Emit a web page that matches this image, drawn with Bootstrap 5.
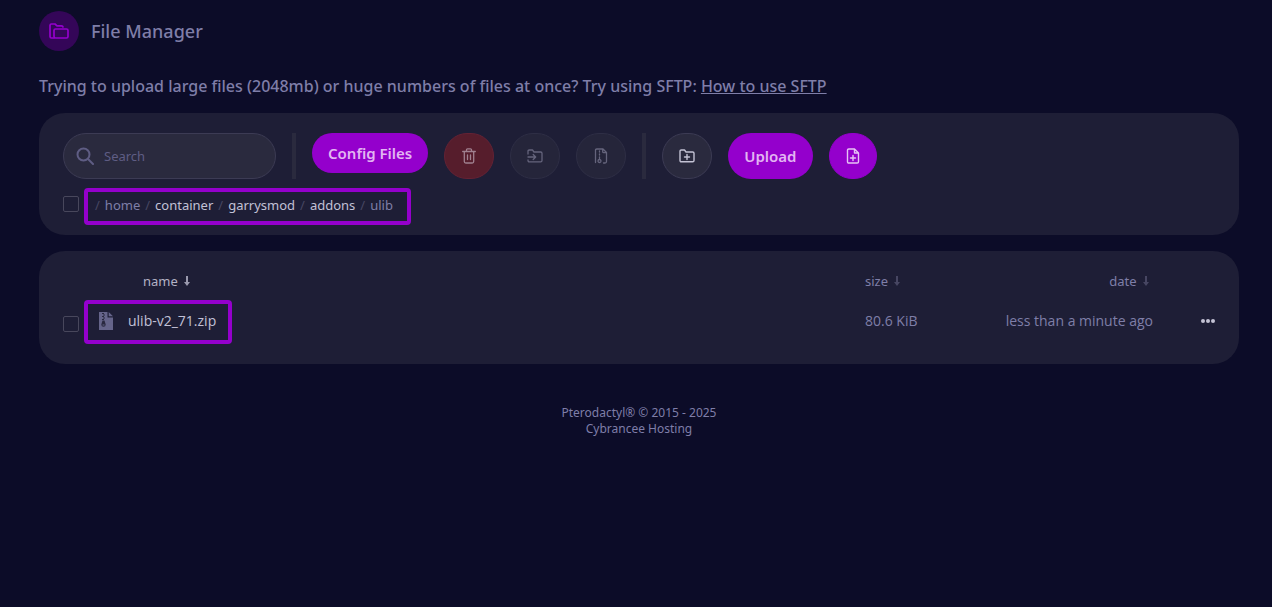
<!DOCTYPE html>
<html lang="en">
<head>
<meta charset="utf-8">
<meta name="viewport" content="width=device-width, initial-scale=1">
<title>File Manager</title>
<link href="https://cdn.jsdelivr.net/npm/bootstrap@5.3.0/dist/css/bootstrap.min.css" rel="stylesheet">
<style>
:root { --page: #0c0c28; --panel: #1e1e36; --field: #2a2a3e; --line: #3c3b54; --accent: #9400cc; --muted: #7f7ea8; --bright: #c2c1d6; --faint: #474662; }
body { background: var(--page); color: var(--muted); font: 13px/20px "Noto Sans", sans-serif; }
main { padding: 11px 33px 0 39px; }
a { color: inherit; }
svg { display: block; fill: none; stroke: currentColor; stroke-linecap: round; stroke-linejoin: round; }
.logo-dot { width: 40px; height: 40px; background: #340658; color: var(--accent); }
.page-title { font-size: 18px; line-height: 28px; font-weight: 500; }
.notice { font-size: 16px; line-height: 24px; font-weight: 500; margin: 23px 0 15px; }
.panel { background: var(--panel); border-radius: 26px; padding: 20px 24px; }
.tools-panel { padding-bottom: 10px; margin-bottom: 16px; }
.search-box { width: 213px; height: 46px; background: var(--field); border: 1px solid var(--line); color: #5f5d84; padding: 0 12px; gap: 10px; }
.search-box input { width: 100%; background: none; border: 0; outline: 0; color: var(--bright); padding: 0; }
.search-box input::placeholder { color: #5f5d84; opacity: 1; }
.divider { width: 4px; height: 46px; background: var(--field); }
.tool { width: 50px; height: 46px; padding: 0; display: flex; align-items: center; justify-content: center; border-radius: 25px; background: var(--field); border: 1px solid var(--line); color: #c3c2d4; }
.tool:disabled { background: #25253a; border-color: #2e2e45; color: #65647c; opacity: 1; }
.tool.trash:disabled { background: #561d2c; border-color: #642234; color: #a0808f; }
.tool.add { width: 48px; background: var(--accent); border-color: var(--accent); color: #e6c3f4; }
.action { height: 46px; padding: 0 16px; border: 0; border-radius: 23px; background: var(--accent); color: #e2b5f2; font-size: 15px; font-weight: 600; }
.action.short { height: 40px; border-radius: 20px; }
.tick { appearance: none; width: 16px; height: 16px; margin: 0; border: 1px solid #48475c; border-radius: 2px; background: transparent; display: block; }
.tick:checked { background: var(--accent); }
.path-row { margin-top: 9px; gap: 5px; }
.framed { border: 4px solid var(--accent); border-radius: 4px; }
.path { height: 37px; padding: 2px 14px 0 7px; gap: 5px; line-height: 22px; }
.path .sep { color: var(--faint); }
.path a { color: var(--bright); text-decoration: none; }
.files { table-layout: fixed; width: 100%; }
.files th { height: 20px; font-weight: 400; padding: 0; }
.files td { height: 73px; padding: 9px 0 0; vertical-align: top; font: 14px/20px "Open Sans", sans-serif; }
.files .arrow { display: inline-block; margin-left: 3px; color: var(--faint); }
.files .sorted { color: #b3b2c4; }
.files .sorted .arrow { color: #9a99ad; }
.files .name-head { padding-left: 59px; }
.files .val { padding-top: 20px; }
.c-tick { width: 21px; } .c-size { width: 100px; } .c-date { width: 188px; } .c-more { width: 62px; }
.file { height: 44px; padding: 0 12px 2px 11px; gap: 15px; color: var(--bright); text-decoration: none; }
.more { display: flex; align-items: center; height: 20px; margin-left: auto; border: 0; background: none; padding: 0; color: #c3c2d4; }
.foot { font-size: 12px; line-height: 16px; margin-top: 41px; }
</style>
</head>
<body>
<main>
  <header class="d-flex align-items-center gap-2">
    <span class="logo-dot rounded-circle d-flex align-items-center justify-content-center me-1">
      <svg width="20" height="16" viewBox="0 0 20 16" stroke-width="1.700"><path d="M5 15H2.500A1.500 1.500 0 0 1 1 13.500V2.200A1.300 1.300 0 0 1 2.300 1H6l2 1.800h4.500Q13.800 2.800 14 4"/><rect x="5" y="6" width="14" height="9" rx="1.500"/></svg>
    </span>
    <h1 class="page-title m-0">File Manager</h1>
  </header>
  <p class="notice">Trying to upload large files (2048mb) or huge numbers of files at once? Try using SFTP: <a href="#">How to use SFTP</a></p>

  <section class="panel tools-panel">
    <div class="d-flex flex-wrap gap-3">
      <label class="search-box rounded-pill d-flex align-items-center">
        <svg class="flex-shrink-0" width="18" height="18" viewBox="0 0 18 18" stroke-width="2"><circle cx="7.500" cy="7.500" r="6"/><path d="M12 12l5 5"/></svg>
        <input type="search" placeholder="Search" aria-label="Search">
      </label>
      <span class="divider"></span>
      <button class="action short" type="button">Config Files</button>
      <button class="tool trash" type="button" disabled aria-label="Delete">
        <svg width="14" height="16" viewBox="0 0 14 16" stroke-width="1.300"><path d="M.7 3.500h12.600M4.500 3.300V1.800q0-1 1-1h3q1 0 1 1v1.500M2.300 3.500v10q0 1.500 1.500 1.500h6.400q1.500 0 1.500-1.500v-10M5.500 7v4.500M8.500 7v4.500"/></svg>
      </button>
      <button class="tool" type="button" disabled aria-label="Move">
        <svg width="16" height="14" viewBox="0 0 16 14" stroke-width="1.300"><path d="M1 5V2.300Q1 1 2.300 1H5.500L7 3h6.700Q15 3 15 4.300v7.200q0 1.300-1.300 1.300H2.300Q1 12.800 1 11.500V11M1 8h7.500M6.200 5.500L8.700 8l-2.500 2.500"/></svg>
      </button>
      <button class="tool" type="button" disabled aria-label="Archive">
        <svg width="14" height="16" viewBox="0 0 14 16" stroke-width="1.300"><path d="M1.500 14.500V2.300Q1.500 1 2.800 1H9l3.500 3.500v9q0 1.500-1.500 1.500H9.500M8.700 1v2.700q0 1 1 1h2.600M5.500 3v1M5.500 6v1M5.500 9v1.500"/><circle cx="5.500" cy="13" r="1.500"/></svg>
      </button>
      <span class="divider"></span>
      <button class="tool" type="button" aria-label="New folder">
        <svg width="16" height="14" viewBox="0 0 16 14" stroke-width="1.400"><path d="M1 2.300Q1 1 2.300 1H5.500L7 3h6.700Q15 3 15 4.300v7.200q0 1.300-1.300 1.300H2.300Q1 12.800 1 11.500zM8 5.500v5M5.500 8h5"/></svg>
      </button>
      <button class="action" type="button">Upload</button>
      <button class="tool add" type="button" aria-label="New file">
        <svg width="14" height="16" viewBox="0 0 14 16" stroke-width="1.400"><path d="M1.500 2.300Q1.500 1 2.800 1H8.500l4 4v8.700q0 1.300-1.300 1.300H2.800q-1.300 0-1.300-1.300zM8.500 1v4h4M7 7.500v5M4.500 10h5"/></svg>
      </button>
    </div>
    <div class="path-row d-flex">
      <input class="tick mt-2" type="checkbox" aria-label="Select all files">
      <nav class="path framed d-flex" aria-label="Path">
        <span class="sep">/</span><span>home</span><span class="sep">/</span><a href="#">container</a><span class="sep">/</span><a href="#">garrysmod</a><span class="sep">/</span><a href="#">addons</a><span class="sep">/</span><span>ulib</span>
      </nav>
    </div>
  </section>

  <section class="panel pb-0">
    <table class="files">
      <colgroup><col class="c-tick"><col><col class="c-size"><col class="c-date"><col class="c-more"></colgroup>
      <thead><tr>
        <th></th>
        <th class="name-head sorted" scope="col">name <span class="arrow"><svg width="6" height="10" viewBox="0 0 6 10"><path stroke="none" fill="currentColor" d="M2 0h2v6h2L3 10 0 6h2z"/></svg></span></th>
        <th scope="col">size <span class="arrow"><svg width="6" height="10" viewBox="0 0 6 10"><path stroke="none" fill="currentColor" d="M2 0h2v6h2L3 10 0 6h2z"/></svg></span></th>
        <th class="text-end pe-1" scope="col">date <span class="arrow"><svg width="6" height="10" viewBox="0 0 6 10"><path stroke="none" fill="currentColor" d="M2 0h2v6h2L3 10 0 6h2z"/></svg></span></th>
        <th></th>
      </tr></thead>
      <tbody><tr>
        <td><input class="tick mt-3" type="checkbox" aria-label="Select ulib-v2_71.zip"></td>
        <td><a class="file framed d-inline-flex align-items-center" href="#">
          <svg width="14" height="18" viewBox="0 0 14 18" stroke="none"><path fill="#65648a" stroke="none" d="M0 0h8.500v5.500H14V18H0zM9.700 0L14 4.300H9.700z"/><path stroke="#29283f" stroke-linecap="butt" d="M3 1.500h2M4 3h2M3 4.500h2M4 6h2M3 7.500h2"/><path stroke="none" fill="#29283f" fill-rule="evenodd" d="M3.500 8.500h2l1.200 4a2.200 2.200 0 1 1-4.400 0zM3.500 12.500h2v1h-2z"/></svg>
          <span>ulib-v2_71.zip</span></a></td>
        <td class="val">80.6 KiB</td>
        <td class="val text-end">less than a minute ago</td>
        <td class="val"><button class="more" type="button" aria-label="More actions"><svg width="14" height="4" viewBox="0 0 14 4"><g fill="currentColor" stroke="none"><circle cx="2" cy="2" r="2"/><circle cx="7" cy="2" r="2"/><circle cx="12" cy="2" r="2"/></g></svg></button></td>
      </tr></tbody>
    </table>
  </section>

  <footer class="foot text-center">Pterodactyl® © 2015 - 2025<br>Cybrancee Hosting</footer>
</main>
<script src="https://cdn.jsdelivr.net/npm/bootstrap@5.3.0/dist/js/bootstrap.bundle.min.js"></script>
</body>
</html>
